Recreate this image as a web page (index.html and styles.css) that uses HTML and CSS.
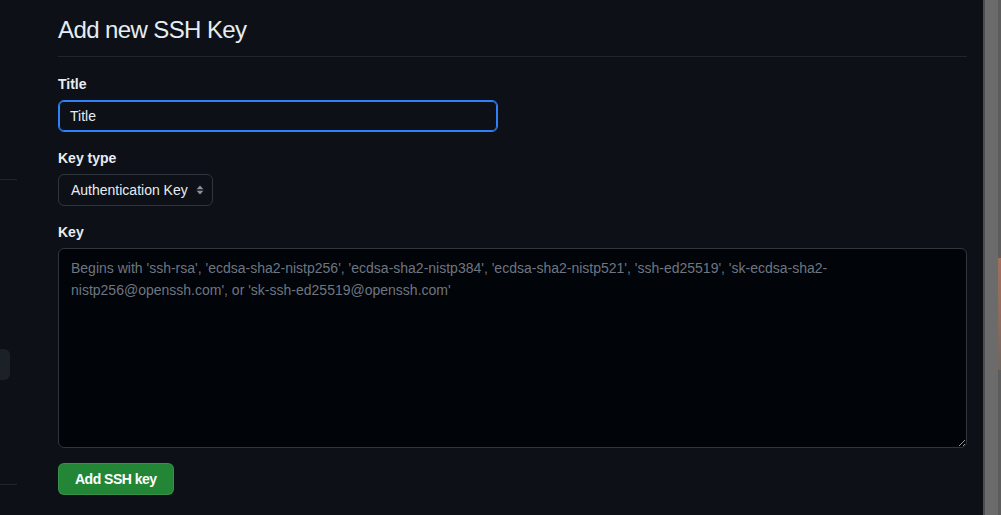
FILE: index.html
```html
<!DOCTYPE html>
<html lang="en">
<head>
<meta charset="utf-8">
<title>Add new SSH Key</title>
<link rel="stylesheet" href="styles.css">
</head>
<body>
<div class="screen">
  <div class="app">
    <aside class="sidebar">
      <div class="side-rule side-rule-top"></div>
      <div class="side-item"></div>
      <div class="side-rule side-rule-bottom"></div>
    </aside>
    <main class="main">
      <div class="subhead">
        <h2 class="subhead-heading">Add new SSH Key</h2>
      </div>
      <form class="ssh-form">
        <div class="form-group">
          <label class="form-label" for="title">Title</label>
          <input class="form-control title-input" id="title" type="text" value="Title">
        </div>
        <div class="form-group">
          <label class="form-label" for="keytype">Key type</label>
          <div class="select">
            <span class="select-text">Authentication Key</span>
            <svg class="select-arrows" width="8" height="12" viewBox="0 0 8 12" aria-hidden="true">
              <path d="M4 1.5 L7.4 5.2 H0.6 Z" fill="#8b949e"/>
              <path d="M4 10.5 L7.4 6.8 H0.6 Z" fill="#8b949e"/>
            </svg>
          </div>
        </div>
        <div class="form-group">
          <label class="form-label" for="key">Key</label>
          <textarea class="form-control key-input" id="key" placeholder="Begins with 'ssh-rsa', 'ecdsa-sha2-nistp256', 'ecdsa-sha2-nistp384', 'ecdsa-sha2-nistp521', 'ssh-ed25519', 'sk-ecdsa-sha2-nistp256@openssh.com', or 'sk-ssh-ed25519@openssh.com'"></textarea>
        </div>
        <button class="btn-primary" type="button">Add SSH key</button>
      </form>
    </main>
  </div>
  <div class="window-edge">
    <div class="edge-bar"></div>
    <div class="edge-peek">
      <div class="peek-color"></div>
    </div>
  </div>
</div>
</body>
</html>
```

FILE: styles.css
```css
* { box-sizing: border-box; }

html, body {
  margin: 0;
  padding: 0;
  background: #0d1117;
}

body {
  font-family: "Liberation Sans", Arial, sans-serif;
  color: #e6edf3;
  font-size: 14px;
}

.screen {
  display: flex;
  width: 1001px;
  height: 515px;
  overflow: hidden;
}

.app {
  flex: 0 0 983px;
  display: flex;
  background: #0d1117;
}

.sidebar {
  flex: 0 0 17px;
  display: flex;
  flex-direction: column;
}

.side-rule {
  height: 1px;
  background: #21262d;
}

.side-rule-top { margin-top: 179px; }

.side-item {
  margin-top: 169px;
  width: 10px;
  height: 31px;
  background: #1c2128;
  border-radius: 0 6px 6px 0;
}

.side-rule-bottom { margin-top: 104px; }

.main {
  flex: 0 0 909px;
  margin-left: 41px;
  padding-top: 12px;
}

.subhead {
  padding-bottom: 8px;
  border-bottom: 1px solid #21262d;
  margin-bottom: 17px;
}

.subhead-heading {
  margin: 0;
  font-size: 24px;
  font-weight: 400;
  line-height: 36px;
  letter-spacing: -0.6px;
}

.form-group {
  margin-bottom: 16px;
}

.form-label {
  display: block;
  font-weight: 700;
  font-size: 14px;
  line-height: 21px;
  margin-bottom: 5px;
}

.form-control {
  font-family: inherit;
  font-size: 14px;
  color: #e6edf3;
  background: #0d1117;
  border: 1px solid #30363d;
  border-radius: 6px;
  outline: none;
}

.title-input {
  display: block;
  width: 440px;
  height: 32px;
  padding: 0 11px;
  line-height: 20px;
  border-color: #2f81f7;
  box-shadow: inset 0 0 0 1px #2f81f7;
}

.select {
  display: flex;
  align-items: center;
  width: 155px;
  height: 32px;
  padding: 0 8px 0 12px;
  border: 1px solid #30363d;
  border-radius: 6px;
  background: #0d1117;
}

.select-text {
  flex: 1;
  white-space: nowrap;
}

.select-arrows { flex: 0 0 8px; }

.key-input {
  display: block;
  width: 909px;
  height: 200px;
  padding: 8px 12px;
  line-height: 22px;
  background: #010409;
  resize: vertical;
}

.key-input::placeholder {
  color: #6e7681;
  opacity: 1;
}

.btn-primary {
  display: block;
  margin-top: -1px;
  height: 32px;
  padding: 0 16px;
  font-family: inherit;
  font-size: 14px;
  font-weight: 700;
  letter-spacing: -0.5px;
  color: #ffffff;
  background: #238636;
  border: 1px solid rgba(240, 246, 252, 0.1);
  border-radius: 6px;
}

.window-edge {
  flex: 0 0 18px;
  display: flex;
  background: #6b6b6b;
  border-left: 2px solid #4e4e4e;
}

.edge-bar { flex: 0 0 13px; }

.edge-peek {
  flex: 1;
  background: #5c5c5c;
  padding-top: 258px;
}

.peek-color {
  height: 112px;
  background: linear-gradient(#a0705a, #8a6a5c 60%, #6e6660);
}
```
